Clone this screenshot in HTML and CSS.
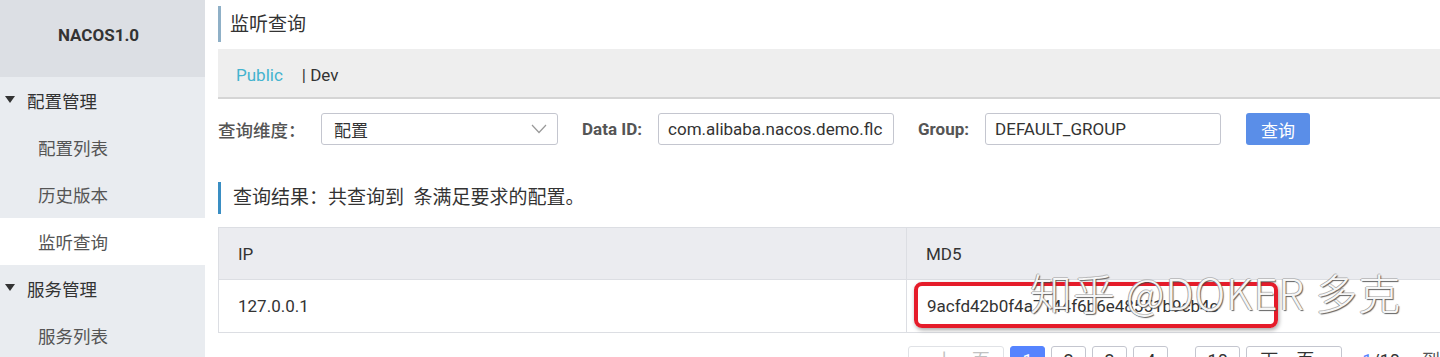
FILE: index.html
```html
<!DOCTYPE html>
<html lang="zh">
<head>
<meta charset="utf-8">
<title>监听查询</title>
<link rel="stylesheet" href="styles.css">
</head>
<body>
<div class="app">
  <aside class="sidebar">
    <div class="brand">NACOS1.0</div>
    <ul class="menu">
      <li class="group"><span class="caret"></span>配置管理</li>
      <li class="item">配置列表</li>
      <li class="item">历史版本</li>
      <li class="item active">监听查询</li>
      <li class="group"><span class="caret"></span>服务管理</li>
      <li class="item">服务列表</li>
    </ul>
  </aside>
  <main class="main">
    <h1 class="title">监听查询</h1>
    <div class="ns-bar">
      <span class="ns-active">Public</span>
      <span class="ns-sep">| Dev</span>
    </div>
    <div class="form-row">
      <label class="label-cn">查询维度：</label>
      <div class="select">
        <span>配置</span>
        <svg class="chev" width="16" height="10" viewBox="0 0 16 10"><polyline points="1,1 8,8.5 15,1" fill="none" stroke="#999" stroke-width="1.2"/></svg>
      </div>
      <label class="label-en">Data ID:</label>
      <div class="input">com.alibaba.nacos.demo.flc</div>
      <label class="label-en">Group:</label>
      <div class="input">DEFAULT_GROUP</div>
      <button class="btn">查询</button>
    </div>
    <h2 class="result-title">查询结果：共查询到&nbsp;&nbsp;条满足要求的配置。</h2>
    <div class="table-wrap">
      <div class="table">
        <div class="row head">
          <div class="cell">IP</div>
          <div class="cell">MD5</div>
        </div>
        <div class="row body">
          <div class="cell">127.0.0.1</div>
          <div class="cell md5">9acfd42b0f4a7144f6b6e48551b9cb4c<span class="highlight"></span></div>
        </div>
      </div>
      <div class="watermark">知乎 @DOKER 多克</div>
    </div>
    <div class="pager">
      <span class="pbtn prev disabled">&lt; 上一页</span>
      <span class="pbtn num current">1</span>
      <span class="pbtn num">2</span>
      <span class="pbtn num">3</span>
      <span class="pbtn num">4</span>
      <span class="ellipsis">...</span>
      <span class="pbtn num wide">10</span>
      <span class="pbtn next">下一页 &gt;</span>
      <span class="pinfo"><em>1</em>/10</span>
      <span class="pgo">到</span>
    </div>
  </main>
</div>
</body>
</html>
```
FILE: styles.css
```css
html, body {
  margin: 0;
  padding: 0;
  background: #fff;
  height: 357px;
  overflow: hidden;
}
body {
  font-family: Roboto, "Noto Sans CJK SC", sans-serif;
  color: #333;
  font-size: 17px;
}
.app {
  display: flex;
  width: 1440px;
  height: 357px;
  overflow: hidden;
}
.sidebar {
  width: 205px;
  flex: none;
  background: #e9ecf0;
}
.brand {
  height: 77px;
  background: #dcdfe4;
  display: flex;
  align-items: center;
  justify-content: center;
  font-weight: 700;
  font-size: 17px;
  color: #333;
  padding-right: 8px;
  padding-bottom: 7px;
  box-sizing: border-box;
}
.menu {
  list-style: none;
  margin: 0;
  padding: 0;
}
.menu li {
  height: 47px;
  display: flex;
  align-items: center;
  font-size: 17.5px;
  box-sizing: border-box;
}
.menu .group {
  padding-left: 5px;
  color: #333;
}
.menu .item {
  padding-left: 38px;
  color: #555;
}
.menu .item.active {
  background: #fff;
}
.caret {
  width: 0;
  height: 0;
  border-left: 5.5px solid transparent;
  border-right: 5.5px solid transparent;
  border-top: 7px solid #333;
  margin-right: 12px;
  margin-top: -2px;
}
.main {
  flex: 1;
  min-width: 0;
  padding-left: 13px;
  overflow: hidden;
}
.title {
  margin: 6px 0 0;
  height: 36px;
  border-left: 3px solid #8fb0c7;
  padding-left: 9px;
  font-size: 19px;
  font-weight: 400;
  line-height: 38px;
  color: #333;
}
.ns-bar {
  margin-top: 7px;
  height: 50px;
  background: #eeeeee;
  border-bottom: 2px solid #d5d5d5;
  box-sizing: border-box;
  display: flex;
  align-items: center;
  padding-left: 18px;
  padding-top: 3px;
  font-size: 17px;
}
.ns-active {
  color: #44b3cf;
}
.ns-sep {
  margin-left: 19px;
  color: #333;
}
.form-row {
  margin-top: 14px;
  height: 32px;
  display: flex;
  align-items: center;
}
.label-cn {
  font-size: 17.5px;
  font-weight: 500;
  color: #555;
  width: 103px;
  flex: none;
}
.label-en {
  font-weight: 700;
  color: #555;
  font-size: 17px;
  flex: none;
}
.select {
  width: 237px;
  height: 32px;
  flex: none;
  box-sizing: border-box;
  border: 1px solid #c4c6cf;
  border-radius: 3px;
  display: flex;
  align-items: center;
  justify-content: space-between;
  padding: 0 10px 0 12px;
  font-size: 17px;
  margin-right: 24px;
}
.chev {
  display: block;
}
.input {
  height: 32px;
  flex: none;
  box-sizing: border-box;
  border: 1px solid #c4c6cf;
  border-radius: 3px;
  display: flex;
  align-items: center;
  padding-left: 9px;
  width: 236px;
  white-space: nowrap;
  overflow: hidden;
  font-size: 17px;
  color: #333;
  margin-left: 16px;
  margin-right: 24px;
}
.btn {
  margin-left: 1px;
  width: 64px;
  height: 32px;
  flex: none;
  border: none;
  border-radius: 3px;
  background: #5a8ee8;
  color: #fff;
  font-family: Roboto, "Noto Sans CJK SC", sans-serif;
  font-size: 17px;
  padding: 0;
}
.result-title {
  margin: 37px 0 0;
  height: 32px;
  border-left: 3px solid #3a8ec3;
  padding-left: 12px;
  font-size: 19px;
  font-weight: 400;
  line-height: 32px;
  color: #333;
  white-space: nowrap;
}
.table-wrap {
  position: relative;
  margin-top: 13px;
}
.table {
  width: 1376px;
  border: 1px solid #dcdee3;
  box-sizing: border-box;
}
.row {
  display: grid;
  grid-template-columns: 687px 1fr;
  height: 52px;
}
.row.head {
  background: #ebecf0;
  border-bottom: 1px solid #dcdee3;
  height: 51px;
}
.cell {
  display: flex;
  align-items: center;
  padding-left: 19px;
  font-size: 17px;
  color: #333;
  position: relative;
}
.cell + .cell {
  border-left: 1px solid #dcdee3;
  padding-left: 19px;
}
.row.body .cell + .cell {
  padding-left: 20px;
}
.highlight {
  position: absolute;
  left: 7px;
  top: 2px;
  width: 364px;
  height: 46px;
  box-sizing: border-box;
  border: 4px solid #e51c2a;
  border-radius: 8px;
  box-shadow: 1px 2px 4px rgba(0,0,0,0.35);
}
.watermark {
  position: absolute;
  left: 812px;
  top: 42px;
  font-family: "Noto Sans CJK SC", sans-serif;
  font-weight: 300;
  font-size: 42px;
  line-height: 1.1;
  color: rgba(255,255,255,0.95);
  text-shadow: 1px 1px 1px rgba(70,70,70,0.85), -1px 0 0 rgba(140,140,140,0.7), 0 -1px 0 rgba(160,160,160,0.6);
  white-space: nowrap;
  letter-spacing: 1px;
}
.pager {
  margin-top: 13px;
  margin-left: 690px;
  display: flex;
  align-items: flex-start;
  white-space: nowrap;
}
.pbtn {
  height: 34px;
  box-sizing: border-box;
  border: 1px solid #c4c6cf;
  border-radius: 3px;
  display: inline-flex;
  align-items: flex-start;
  justify-content: center;
  font-size: 18px;
  line-height: 22px;
  padding-top: 3px;
  color: #333;
  flex: none;
}
.prev, .next {
  width: 96px;
}
.prev {
  margin-right: 6px;
}
.disabled {
  color: #c1c1c1;
  border-color: #e0e2e6;
}
.num {
  width: 35px;
  margin-right: 6px;
}
.num.current {
  background: #5584ff;
  border-color: #5584ff;
  color: #fff;
}
.num.wide {
  width: 45px;
}
.ellipsis {
  width: 30px;
  text-align: center;
  color: #333;
  font-size: 18px;
  line-height: 22px;
  padding-top: 4px;
}
.pinfo {
  margin-left: 20px;
  font-size: 18px;
  line-height: 22px;
  padding-top: 4px;
}
.pinfo em {
  font-style: normal;
  color: #5584ff;
}
.pgo {
  margin-left: 22px;
  font-size: 18px;
  line-height: 22px;
  padding-top: 4px;
  color: #555;
}
```
